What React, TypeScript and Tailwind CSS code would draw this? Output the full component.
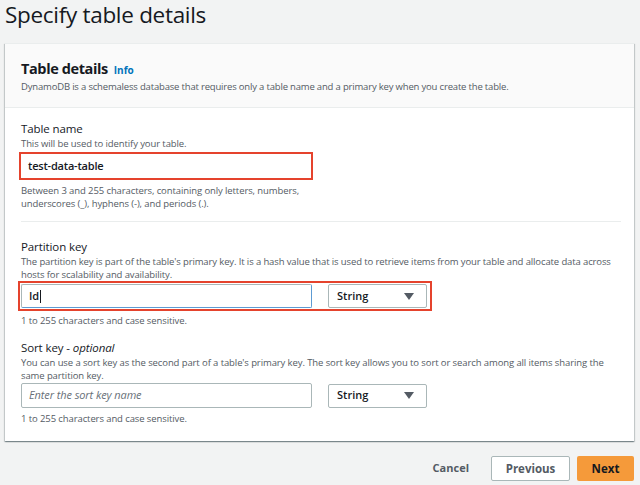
import React from "react";

function Select() {
  return (
    <div className="w-[99px] h-[24px] border border-[#aab7b8] rounded-[2px] bg-white flex items-center justify-between pl-[8px] pr-[12px]">
      <span className="text-[11px] font-semibold text-[#16191f]">String</span>
      <svg width="10" height="7" viewBox="0 0 10 7"><path d="M0 0 L10 0 L5 7 Z" fill="#545b64" /></svg>
    </div>
  );
}

export default function App() {
  return (
    <div className="w-[640px] h-[485px] bg-[#f2f3f3] overflow-hidden text-[#16191f]" style={{ fontFamily: '"Open Sans", "Noto Sans", sans-serif' }}>
      <h1 className="pl-[5px] h-[43px] text-[22.5px] leading-[28px] pt-[1px] tracking-[-0.3px] text-[#16191f]">Specify table details</h1>
      <div className="mx-[5px] w-[629px] bg-white shadow-[0_1px_1px_0_rgba(0,28,36,0.3),1px_1px_1px_0_rgba(0,28,36,0.15),-1px_1px_1px_0_rgba(0,28,36,0.15)] border-t border-[#eaeded]">
        <div className="h-[64px] bg-[#fafafa] border-b border-[#eaeded] px-[16px] pt-[15px]">
          <div className="flex items-baseline gap-[6px]">
            <span className="text-[14.5px] leading-[20px] font-bold tracking-[-0.4px]">Table details</span>
            <span className="text-[10px] font-bold text-[#0073bb]">Info</span>
          </div>
          <p className="text-[9.5px] leading-[14px] mt-[1px] text-[#545b64] tracking-[-0.18px]">DynamoDB is a schemaless database that requires only a table name and a primary key when you create the table.</p>
        </div>
        <div className="px-[16px] pt-[13px] pb-[16px]">
          <div className="text-[11.5px] leading-[16px] tracking-[-0.1px]">Table name</div>
          <div className="text-[9.5px] leading-[14px] text-[#545b64] tracking-[-0.1px]">This will be used to identify your table.</div>
          <div className="mt-[1px] -ml-[2px] w-[294px] h-[28px] border-2 border-[#e5432d] flex items-center pl-[7px]">
            <span className="text-[11px] font-semibold text-[#16191f] tracking-[-0.2px]">test-data-table</span>
          </div>
          <div className="mt-[4px] w-[290px] text-[9.5px] leading-[13px] text-[#545b64] tracking-[-0.1px]">Between 3 and 255 characters, containing only letters, numbers, underscores (_), hyphens (-), and periods (.).</div>
          <div className="mt-[11px] h-px bg-[#eaeded] w-[600px]" />
          <div className="mt-[17px] text-[11.5px] leading-[16px] tracking-[-0.1px]">Partition key</div>
          <div className="text-[9.5px] leading-[13px] text-[#545b64] tracking-[-0.12px]">The partition key is part of the table's primary key. It is a hash value that is used to retrieve items from your table and allocate data across hosts for scalability and availability.</div>
          <div className="-ml-[3px] w-[414px] h-[30px] border-2 border-[#e5432d] flex items-center pl-[1px] gap-[16px]">
            <div className="w-[291px] h-[24px] border border-[#aab7b8] border-r-[#5d9bd3] border-b-[#5d9bd3] rounded-[2px] bg-white flex items-center pl-[7px]">
              <span className="text-[11px] font-semibold">Id</span>
              <span className="w-px h-[13px] bg-[#16191f] ml-[1px]" />
            </div>
            <Select />
          </div>
          <div className="mt-[3px] text-[9.5px] leading-[13px] text-[#545b64] tracking-[-0.1px]">1 to 255 characters and case sensitive.</div>
          <div className="mt-[13px] text-[11.5px] leading-[16px] tracking-[-0.1px]">Sort key - <i>optional</i></div>
          <div className="text-[9.5px] leading-[13px] text-[#545b64] tracking-[-0.1px]">You can use a sort key as the second part of a table's primary key. The sort key allows you to sort or search among all items sharing the same partition key.</div>
          <div className="mt-[1px] flex items-center gap-[16px]">
            <div className="w-[291px] h-[25px] border border-[#aab7b8] rounded-[2px] bg-white flex items-center pl-[7px]">
              <span className="text-[11px] italic text-[#687078] tracking-[-0.1px]">Enter the sort key name</span>
            </div>
            <Select />
          </div>
          <div className="mt-[4px] text-[9.5px] leading-[13px] text-[#545b64] tracking-[-0.1px]">1 to 255 characters and case sensitive.</div>
        </div>
      </div>
      <div className="flex justify-end items-center pr-[6px] mt-[15px] gap-[7px]">
        <span className="text-[11px] font-bold text-[#545b64] mr-[15px]">Cancel</span>
        <div className="w-[79px] h-[25px] border border-[#aab7b8] bg-white rounded-[2px] flex items-center justify-center text-[11.5px] font-bold text-[#545b64]">Previous</div>
        <div className="w-[57px] h-[25px] bg-[#f59a3a] rounded-[2px] flex items-center justify-center text-[11.5px] font-bold text-[#16191f]">Next</div>
      </div>
    </div>
  );
}
